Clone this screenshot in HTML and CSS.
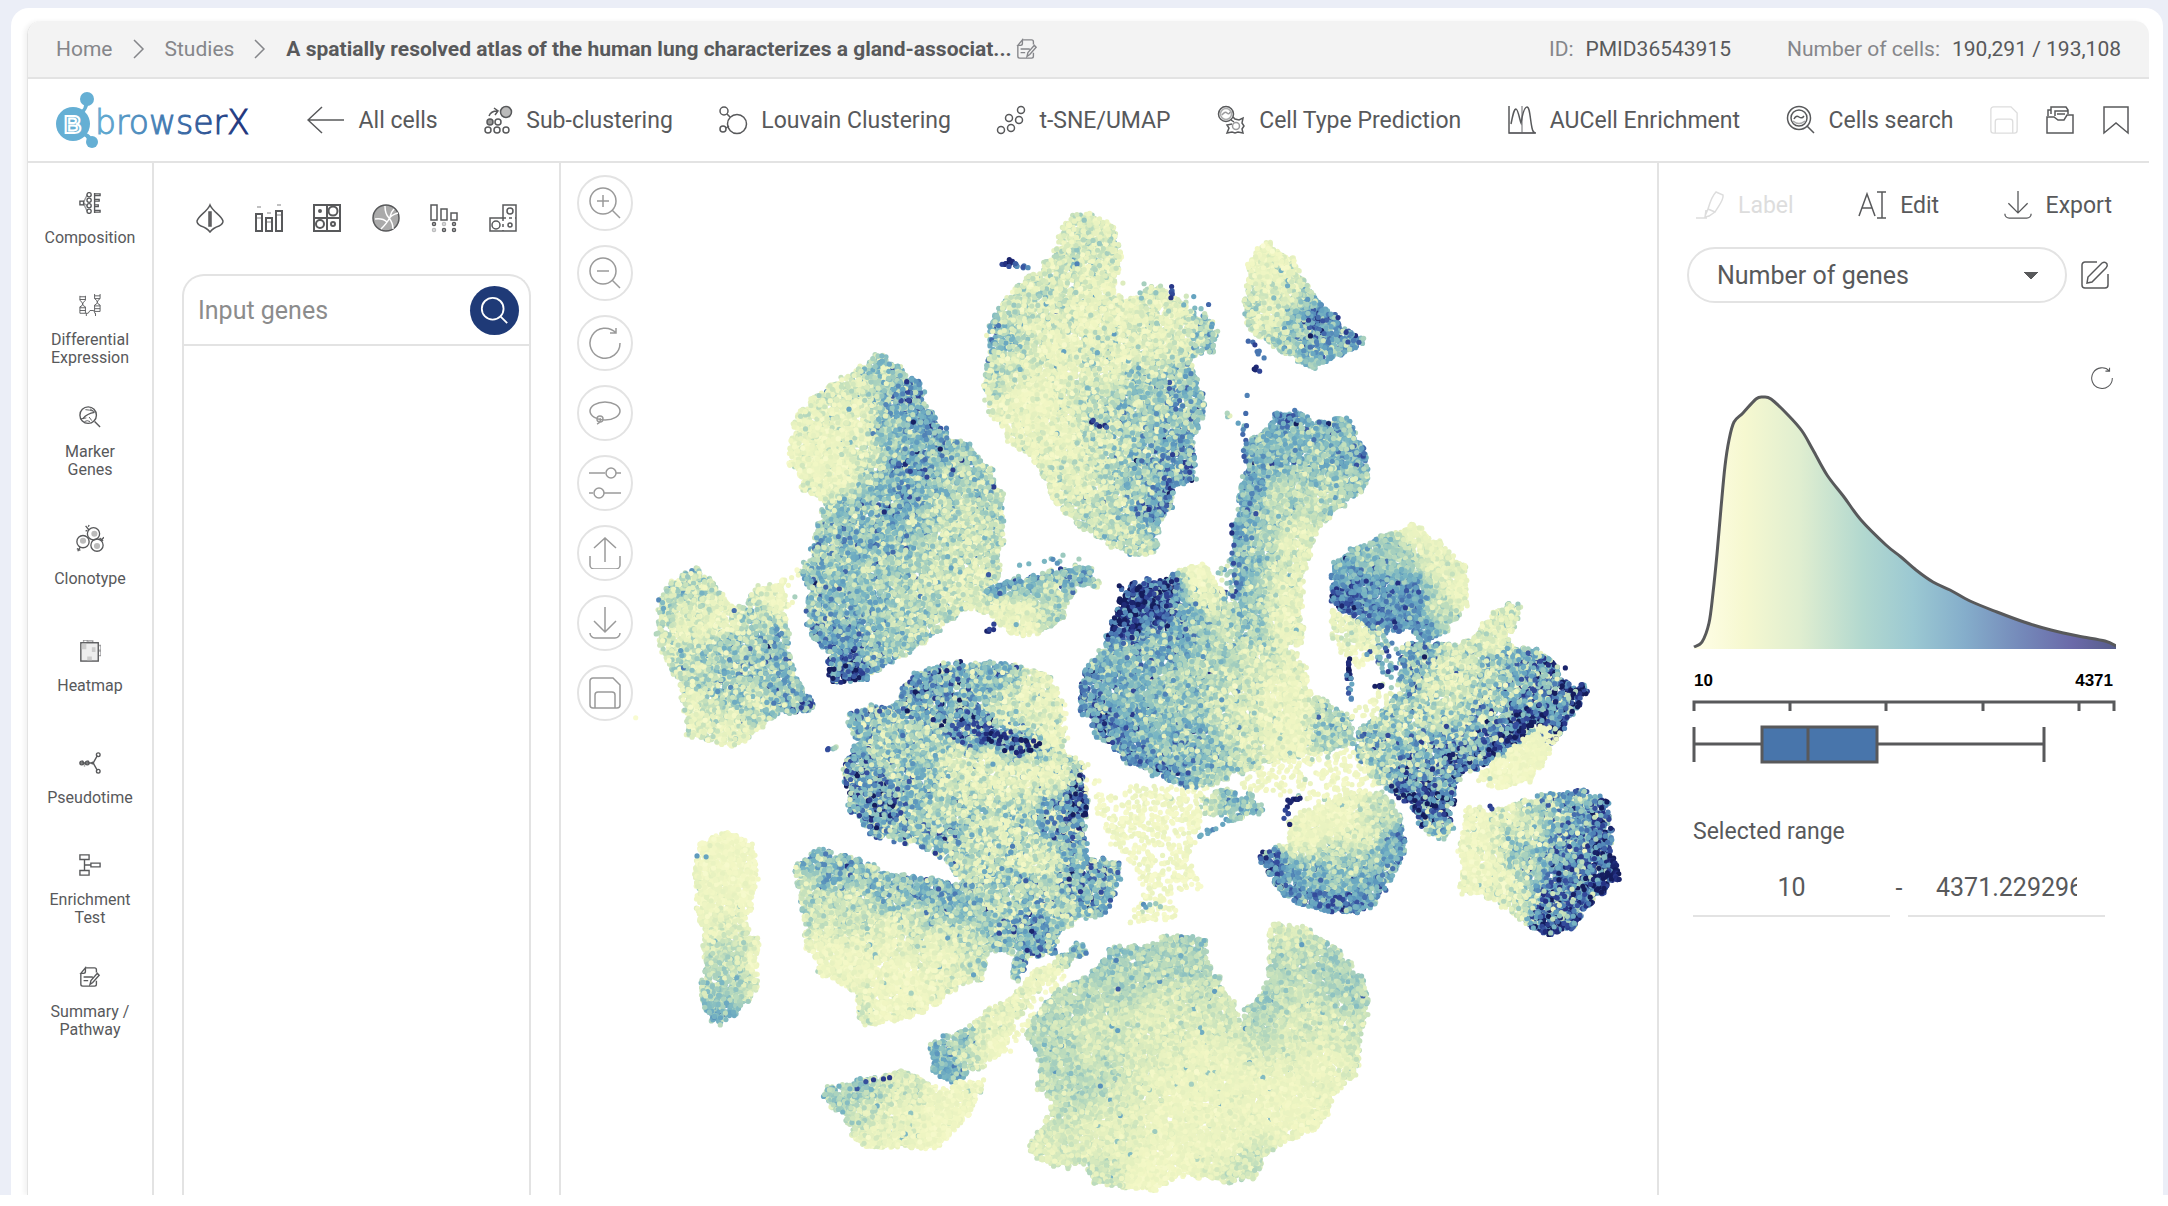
FILE: index.html
```html
<!DOCTYPE html>
<html lang="en">
<head>
    <meta charset="UTF-8">
    <meta name="viewport" content="width=device-width, initial-scale=1.0">
    <title>BrowserX</title>
    <link rel="stylesheet" href="styles.css">
</head>
<body>
    <svg class="sprite" aria-hidden="true">
        <symbol id="i-note" viewBox="0 0 24 24"><path d="M7 2h10a2 2 0 0 1 2 2v3M2 8v12a2 2 0 0 0 2 2h13a2 2 0 0 0 2-2v-4M2 8l5-6v4a2 2 0 0 1-2 2zM5 12h10M5 16h5M12 20l1-4 7-8 2 2-7 8z"/></symbol>
        <symbol id="i-chevron" viewBox="0 0 12 20"><path d="M1 1l9 9-9 9"/></symbol>
        <symbol id="i-plus" viewBox="0 0 32 32"><circle cx="14" cy="14" r="13"/><path d="M23 23l8 8M8 14h12M14 8v12"/></symbol>
        <symbol id="i-minus" viewBox="0 0 32 32"><circle cx="14" cy="14" r="13"/><path d="M23 23l8 8M8 14h12"/></symbol>
        <symbol id="i-reload" viewBox="0 0 32 32"><path d="M31 16a15 15 0 1 1-4-10M27 1v5h-6"/></symbol>
        <symbol id="i-lasso" viewBox="0 0 32 32"><ellipse cx="16" cy="14" rx="15" ry="9"/><circle cx="11" cy="22" r="3"/><path d="M8 27c3-1 4-3 3-6"/></symbol>
        <symbol id="i-sliders" viewBox="0 0 32 32"><path d="M0 6h16M27 6h5M0 26h4M15 26h17"/><circle cx="22" cy="6" r="5"/><circle cx="10" cy="26" r="5"/></symbol>
        <symbol id="i-upload" viewBox="0 0 32 32"><path d="M16 25V1M5 11L16 1l11 10M1 19v9a4 4 0 0 0 4 4h22a4 4 0 0 0 4-4v-9"/></symbol>
        <symbol id="i-download" viewBox="0 0 32 32"><path d="M16 0v25M5 14l11 11 11-11M1 26a5 5 0 0 0 5 5h20a5 5 0 0 0 5-5"/></symbol>
        <symbol id="i-save" viewBox="0 0 32 32"><path d="M4 1h20l7 7v20a3 3 0 0 1-3 3H4a3 3 0 0 1-3-3V4a3 3 0 0 1 3-3zM6 31V18a3 3 0 0 1 3-3h14a3 3 0 0 1 3 3v13"/></symbol>
    </svg>

    <div class="page">
    <div class="frame">
    <div class="app">

        <header class="crumbs">
            <nav class="crumb-list" aria-label="Breadcrumb">
                <a href="#">Home</a>
                <svg class="chevron"><use href="#i-chevron"/></svg>
                <a href="#">Studies</a>
                <svg class="chevron"><use href="#i-chevron"/></svg>
                <strong>A spatially resolved atlas of the human lung characterizes a gland-associat...</strong>
                <button class="icon-btn rename" aria-label="Edit title"><svg class="icon-s"><use href="#i-note"/></svg></button>
            </nav>
            <dl class="meta">
                <dt>ID:</dt><dd>PMID36543915</dd>
                <dt>Number of cells:</dt><dd>190,291 / 193,108</dd>
            </dl>
        </header>

        <div class="toolbar">
            <a class="logo" href="#" aria-label="BrowserX">
                <svg width="200" height="58" viewBox="0 0 200 58">
                    <defs>
                        <linearGradient id="wordmark"><stop offset="0" stop-color="#64aed3"/><stop offset=".5" stop-color="#3f74ad"/><stop offset="1" stop-color="#1d2f78"/></linearGradient>
                    </defs>
                    <g fill="#65afd4" stroke="none">
                        <circle cx="17" cy="33" r="17"/><circle cx="31" cy="8" r="7"/><circle cx="36" cy="51" r="6"/>
                        <path d="M24 20q5-3 4-8h5q-2 7-6 11zM26 45q5 0 5 5h5q0-6-6-8z"/>
                    </g>
                    <text x="8" y="42" class="mark">B</text>
                    <text x="39" y="43" class="wordmark">browserX</text>
                </svg>
            </a>
            <button class="tool">
                <svg class="arrow" viewBox="0 0 38 28"><path d="M37 14H1M15 1L1 14l14 13"/></svg>All cells
            </button>
            <button class="tool">
                <svg class="icon" viewBox="0 0 28 28"><circle cx="22" cy="6" r="5.500" fill="#bbb"/><circle cx="6" cy="16" r="3" fill="#999"/><circle cx="14" cy="16" r="3"/><circle cx="4" cy="24" r="3"/><circle cx="13" cy="24" r="3"/><circle cx="22" cy="24" r="3"/><path d="M5 10q2-5 8-5M10 2l4 3-3 4"/></svg>Sub-clustering
            </button>
            <button class="tool">
                <svg class="icon" viewBox="0 0 28 28"><circle cx="5" cy="5" r="4"/><circle cx="18" cy="18" r="9.500"/><circle cx="4" cy="23" r="3"/><path d="M8 8l3 3M7 22l3-2"/></svg>Louvain Clustering
            </button>
            <button class="tool">
                <svg class="icon" viewBox="0 0 28 28"><circle cx="24" cy="4" r="3.500"/><circle cx="12" cy="12" r="3.500"/><circle cx="22" cy="14" r="3.500"/><circle cx="14" cy="22" r="3.500"/><circle cx="4" cy="24" r="3.500"/></svg>t-SNE/UMAP
            </button>
            <button class="tool">
                <svg class="icon" viewBox="0 0 28 28"><circle cx="9" cy="8" r="7.500"/><circle cx="9" cy="8" r="5.500" opacity=".5"/><path d="M5 9q3-4 5-2t3-1" opacity=".6"/><path d="M14 14l3 2M16 11l2 2 4 1 4-2-1 5 2 3-2 3 1 4-5-1-3 1-3-1-5 1 2-5-2-3 5-1"/><circle cx="19" cy="20" r="3.500" opacity=".6"/></svg>Cell Type Prediction
            </button>
            <button class="tool">
                <svg class="icon" viewBox="0 0 28 28"><path d="M1 0v27h27M3 18C5 8 6 3 8 3s4 12 5 14c1-6 3-16 6-16s3 12 5 21q1 5 4 5"/><path d="M14 0v27M1 27h26" opacity=".6"/></svg>AUCell Enrichment
            </button>
            <button class="tool">
                <svg class="icon" viewBox="0 0 28 28"><circle cx="12" cy="12" r="11.500"/><circle cx="12" cy="12" r="8"/><path d="M7 13q2-4 5-2t5-1M20 20l7 7"/><path d="M6 15q6 5 12 0" opacity=".5"/></svg>Cells search
            </button>
            <div class="tool-icons">
                <button class="icon-btn" disabled aria-label="Save"><svg class="icon faint"><use href="#i-save"/></svg></button>
                <button class="icon-btn" aria-label="Collections"><svg class="icon" viewBox="0 0 28 28"><path d="M1 11h7l4 3h6l3-5h6v18H1zM2 10V4h3M5 8V1h15l2 3v4M9 10V5h13M11 8h8"/></svg></button>
                <button class="icon-btn" aria-label="Bookmark"><svg class="icon" viewBox="0 0 28 28"><path d="M2 1h24v26l-12-10L2 27z"/></svg></button>
            </div>
        </div>

        <main class="body">
            <nav class="side" aria-label="Analyses">
                <a class="side-item s" href="#"><svg class="icon-s" viewBox="0 0 24 24"><rect x="1" y="10" width="4" height="4"/><path d="M5 11l4-8M5 12l4 3M5 13l4 8" opacity=".6"/><circle cx="11" cy="3" r="2.300"/><circle cx="11" cy="9" r="2.300"/><circle cx="11" cy="15" r="2.300"/><circle cx="11" cy="21" r="2.300"/><path d="M17 1v22M17 2h6v2h-6zM17 8h5v2h-5zM17 14h4v2h-4zM17 20h6v2h-6z"/></svg>Composition</a>
                <a class="side-item l" href="#"><svg class="icon-s" viewBox="0 0 24 24"><path d="M1 2v5q3 2 3 4t-3 3v7h6v-7q-3-1-3-3t3-4V2M1 3h6M1 6h6M1 15h6M1 18h6M17 0v5q3 2 3 4t-3 3v7h6v-7q-3-1-3-3t3-4V0M17 2h6M17 5h6M17 13h6M17 16h6M7 21h3l2-3h4l2 4M8 24v-3M18 24v-3" stroke-width="1"/></svg>Differential<br>Expression</a>
                <a class="side-item xl" href="#"><svg class="icon-s" viewBox="0 0 24 24"><circle cx="10" cy="10" r="9"/><path d="M17 17l6 6M4 14q5-6 13-7"/><path d="M7 4q4 0 10 2M2 14l6-1M6 17q3-2 6 0M12 3l4 3M11 12l3 4" stroke-width="1"/></svg>Marker<br>Genes</a>
                <a class="side-item xl" href="#"><svg class="icon-m" viewBox="0 0 32 32"><circle cx="20" cy="10" r="7"/><circle cx="8" cy="19" r="7"/><circle cx="24" cy="23" r="7"/><g fill="#bbb" stroke="none"><circle cx="21" cy="10" r="3.500"/><circle cx="8" cy="18" r="3.500"/><circle cx="24" cy="24" r="3.500"/></g><path d="M15 6l-4-5M13 6l-2 1M14 2l1-2M5 25l-3 5M1 27l4 2M28 18l4-4M27 15l4 3"/></svg>Clonotype</a>
                <a class="side-item l" href="#"><svg class="icon-s" viewBox="0 0 24 24"><rect x="2" y="3" width="19" height="20" fill="#eee"/><g fill="#ccc" stroke="none"><path d="M3 4h5v6H3zM9 18h5v4H9zM14 8h4v5h-4z"/></g><path d="M5 2V0h4v2M10 2V1h5v2M22 6h2v5h-2M22 12h2v5h-2" opacity=".6"/></svg>Heatmap</a>
                <a class="side-item s" href="#"><svg class="icon-s" viewBox="0 0 24 24"><circle cx="3" cy="12" r="2"/><circle cx="9" cy="12" r="2"/><circle cx="15" cy="12" r="1"/><circle cx="21" cy="3" r="2"/><circle cx="21" cy="21" r="2"/><path d="M1 12h15M16 11l4-7M16 13l4 7"/><path d="M4 9v3M6 12v4M10 9v3" opacity=".5"/></svg>Pseudotime</a>
                <a class="side-item l" href="#"><svg class="icon-s" viewBox="0 0 24 24"><path d="M1 1h10v5H1zM13 10h10v4H13zM1 18h10v5H1zM6 6v12M6 12h7"/></svg>Enrichment<br>Test</a>
                <a class="side-item l" href="#"><svg class="icon-s"><use href="#i-note"/></svg>Summary /<br>Pathway</a>
            </nav>

            <section class="genes">
                <div class="plot-types">
                    <button class="icon-btn" aria-label="Violin plot"><svg class="icon" viewBox="0 0 28 28"><path d="M14 1C17 8 25 11 27 17q0 3-4 5-6 2-9 6-3-4-9-6-4-2-4-5C3 11 11 8 14 1z"/><path d="M13 8h2v14h-2z" fill="#777"/></svg></button>
                    <button class="icon-btn" aria-label="Box plot"><svg class="icon dark" viewBox="0 0 28 28"><path d="M1 10h6v17H1zM11 14h6v13h-6zM21 7h6v20h-6z"/><path d="M1 14h6M11 18h6M21 11h6M2 3h4M12 9h4M22 1h4" opacity=".5" stroke-width="1.500"/></svg></button>
                    <button class="icon-btn" aria-label="Dot plot"><svg class="icon dark" viewBox="0 0 28 28"><path d="M1 1h26v26H1zM14 1v26M1 14h26"/><circle cx="7" cy="7" r="1"/><circle cx="20" cy="7" r="4.500"/><circle cx="7" cy="20" r="4"/><circle cx="20" cy="20" r="2"/></svg></button>
                    <button class="icon-btn" aria-label="Density plot"><svg class="icon" viewBox="0 0 28 28"><circle cx="14" cy="14" r="13" fill="#aaa"/><g stroke="#fff"><path d="M13 2q0 8 4 12 4 5 4 11M26 9q-7 2-9 6t-8 10M3 15q8-1 12 3M22 5q-3 3-4 8"/></g></svg></button>
                    <button class="icon-btn" aria-label="UpSet plot"><svg class="icon" viewBox="0 0 28 28"><path d="M1 1h6v15H1zM11 5h6v11h-6zM21 9h6v7h-6z"/><circle cx="4" cy="20" r="1.500"/><circle cx="24" cy="20" r="1.500"/><circle cx="14" cy="26" r="1.500"/><circle cx="24" cy="26" r="1.500"/><g opacity=".4"><circle cx="14" cy="20" r="1.500"/><circle cx="4" cy="26" r="1.500"/></g></svg></button>
                    <button class="icon-btn" aria-label="Correlation"><svg class="icon" viewBox="0 0 28 28"><path d="M14 14V1h13v26H1V14z"/><path d="M14 14h13M14 14v13" stroke-dasharray="3 3"/><circle cx="21" cy="7" r="3"/><circle cx="7" cy="21" r="4"/><circle cx="21" cy="21" r="2"/></svg></button>
                </div>
                <div class="gene-box">
                    <form class="gene-search">
                        <input type="text" aria-label="Input genes" placeholder="Input genes">
                        <button type="button" class="go" aria-label="Search"><svg viewBox="0 0 32 32"><circle cx="14" cy="14" r="12"/><path d="M22 22l8 8"/></svg></button>
                    </form>
                </div>
            </section>

            <section class="scatter">
                <canvas id="umap"></canvas>
                <div class="view-tools">
                    <button aria-label="Zoom in"><svg><use href="#i-plus"/></svg></button>
                    <button aria-label="Zoom out"><svg><use href="#i-minus"/></svg></button>
                    <button aria-label="Reset"><svg><use href="#i-reload"/></svg></button>
                    <button aria-label="Lasso"><svg><use href="#i-lasso"/></svg></button>
                    <button aria-label="Settings"><svg><use href="#i-sliders"/></svg></button>
                    <button aria-label="Upload"><svg><use href="#i-upload"/></svg></button>
                    <button aria-label="Download"><svg><use href="#i-download"/></svg></button>
                    <button aria-label="Save"><svg><use href="#i-save"/></svg></button>
                </div>
            </section>

            <aside class="legend">
                <div class="legend-actions">
                    <button class="tool" disabled><svg class="icon" viewBox="0 0 28 28"><path d="M20 1l7 3c1 5-4 10-8 17l-7-3C14 11 16 5 20 1zM12 18l-3 7M19 21l-6 4-4 1 1-7M0 27h11"/></svg>Label</button>
                    <button class="tool"><svg class="icon" viewBox="0 0 28 28"><path d="M1 25L9 3l8 22M4 17h10M19 1h9M19 27h9M24 1v26"/></svg>Edit</button>
                    <button class="tool"><svg class="icon"><use href="#i-download"/></svg>Export</button>
                </div>
                <div class="legend-pick">
                    <select aria-label="Colour by"><option>Number of genes</option></select>
                    <button class="icon-btn" aria-label="Edit annotation"><svg class="icon" viewBox="0 0 28 28"><path d="M16 1H4a3 3 0 0 0-3 3v20a3 3 0 0 0 3 3h20a3 3 0 0 0 3-3V13M6 22l1-6L21 2q3-2 5 1 1 2-1 4L11 21z"/></svg></button>
                </div>
                <button class="icon-btn reset" aria-label="Reset range"><svg class="icon-s"><use href="#i-reload"/></svg></button>
                <svg class="density" viewBox="0 0 424 378">
                    <defs>
                        <linearGradient id="ramp">
                            <stop offset="0" stop-color="#fffee8"/><stop offset=".12" stop-color="#f6f8d0"/><stop offset=".25" stop-color="#e0eed0"/>
                            <stop offset=".4" stop-color="#b2d8cf"/><stop offset=".52" stop-color="#9bc8d2"/><stop offset=".64" stop-color="#85aecb"/>
                            <stop offset=".78" stop-color="#7488b9"/><stop offset=".9" stop-color="#6a69a8"/><stop offset="1" stop-color="#565d8c"/>
                        </linearGradient>
                    </defs>
                    <path id="area" fill="url(#ramp)"/>
                    <path id="curve" class="ink"/>
                    <text x="2" y="296">10</text>
                    <text x="421" y="296" text-anchor="end">4371</text>
                    <path class="ink" d="M2 321v-9h420v9M98 312v9M194 312v9M291 312v9M387 312v9"/>
                    <path class="ink" d="M2 337v35M2 354h68M185 354h167M352 337v35"/>
                    <rect class="ink box" x="70" y="337" width="115" height="35"/>
                    <path class="ink" d="M116 337v35"/>
                </svg>
                <p class="range-title">Selected range</p>
                <div class="range">
                    <input type="text" value="10" aria-label="Range start">
                    <span>-</span>
                    <input type="text" value="4371.229296875" aria-label="Range end">
                </div>
            </aside>
        </main>
    </div>
    </div>
    </div>
    <script src="plot.js"></script>
</body>
</html>
```
FILE: styles.css
```css
* {
    margin: 0;
    padding: 0;
    box-sizing: border-box;
}
html, body {
    height: 100%;
}
body {
    font-family: Roboto, sans-serif;
    font-size: 23px;
    color: #58595b;
    background-color: #fff;
    overflow: hidden;
}
a {
    color: inherit;
    text-decoration: none;
}
button, input, select {
    font: inherit;
    color: inherit;
    border: none;
    background: none;
    outline: none;
}
svg {
    display: block;
    fill: none;
    stroke: currentColor;
    stroke-width: 1.5;
}
.sprite {
    position: absolute;
    width: 0;
    height: 0;
}
.icon {
    width: 28px;
    height: 28px;
    flex: none;
    overflow: visible;
}
.icon.dark {
    stroke-width: 2;
}
.icon-s {
    width: 22px;
    height: 22px;
}
.icon-m {
    width: 28px;
    height: 32px;
}
.faint {
    color: #ddd;
}

/* outer shell */
.page {
    height: calc(100vh - 11px);
    padding: 8px 5px 0 11px;
    background-color: #ebeef7;
}
.frame {
    height: 100%;
    padding: 13px 14px 0 16px;
    background-color: #fff;
    border-radius: 18px 18px 0 0;
    overflow: hidden;
}
.app {
    height: 100%;
    display: flex;
    flex-direction: column;
    border-left: 1px solid #e3e3e3;
    border-radius: 14px 14px 0 0;
    box-shadow: -3px 0 4px #f3f3f3;
}

/* breadcrumbs */
.crumbs {
    height: 58px;
    flex: none;
    display: flex;
    justify-content: space-between;
    align-items: center;
    padding: 0 28px;
    background-color: #f3f3f3;
    border-bottom: 2px solid #e3e3e3;
    border-radius: 14px 14px 0 0;
    font-size: 21px;
    color: #85868a;
    white-space: nowrap;
}
.crumb-list {
    display: flex;
    align-items: center;
    gap: 20px;
}
.crumb-list strong {
    color: #58595b;
}
.chevron {
    width: 12px;
    height: 20px;
}
.rename {
    margin-left: -16px;
}
.meta {
    display: flex;
}
.meta dd {
    margin-left: 12px;
    color: #58595b;
}
.meta dd + dt {
    margin-left: 56px;
}

/* top tools */
.toolbar {
    height: 84px;
    flex: none;
    display: flex;
    justify-content: space-between;
    align-items: center;
    padding: 0 14px 0 28px;
    border-bottom: 2px solid #e3e3e3;
}
.mark {
    font: bold 24px "Liberation Sans", sans-serif;
    stroke: #fff;
    stroke-width: 2;
}
.wordmark {
    font: 200 33px "DejaVu Sans", sans-serif;
    fill: url(#wordmark);
    stroke: url(#wordmark);
    stroke-width: 1;
}
.logo {
    margin-right: 4px;
}
.tool {
    display: flex;
    align-items: center;
    gap: 14px;
    white-space: nowrap;
}
.tool:disabled {
    color: #ddd;
}
.arrow {
    width: 38px;
    height: 28px;
}
.tool-icons {
    display: flex;
    gap: 28px;
    margin: 0 5px 0 -10px;
}

/* columns */
.body {
    flex: 1;
    min-height: 0;
    display: grid;
    grid-template-columns: 126px 407px 1fr 492px;
}
.side {
    padding-top: 29px;
    border-right: 2px solid #e3e3e3;
    font-size: 16px;
    line-height: 18px;
    text-align: center;
}
.side-item {
    display: flex;
    flex-direction: column;
    align-items: center;
    gap: 15px;
}
.side-item.s {
    height: 102px;
}
.side-item.l {
    height: 112px;
}
.side-item.xl {
    height: 117px;
}

.genes {
    display: flex;
    flex-direction: column;
    padding: 41px 28px 0;
    border-right: 2px solid #e3e3e3;
}
.plot-types {
    display: flex;
    justify-content: space-between;
    padding: 0 14px;
    margin-bottom: 42px;
}
.gene-box {
    flex: 1;
    border: 2px solid #e3e3e3;
    border-bottom: none;
    border-radius: 22px 22px 0 0;
}
.gene-search {
    height: 70px;
    display: flex;
    align-items: center;
    padding: 0 10px 0 14px;
    border-bottom: 2px solid #e3e3e3;
    font-size: 25px;
}
.gene-search input {
    flex: 1;
    min-width: 0;
}
.gene-search input::placeholder {
    color: #8c8c8c;
}
.go {
    width: 49px;
    height: 49px;
    padding: 10px;
    border-radius: 50%;
    background-color: #1f3a77;
    color: #fff;
}
.go svg {
    width: 29px;
    height: 29px;
    stroke-width: 2;
}

.scatter {
    position: relative;
    min-width: 0;
    overflow: hidden;
}
#umap {
    display: block;
    width: 100%;
    height: 100%;
}
.view-tools {
    position: absolute;
    top: 12px;
    left: 16px;
    display: flex;
    flex-direction: column;
    gap: 14px;
}
.view-tools button {
    width: 56px;
    height: 56px;
    display: flex;
    justify-content: center;
    align-items: center;
    border: 2px solid #e3e3e3;
    border-radius: 50%;
    background-color: #fff;
    color: #9a9a9a;
}
.view-tools svg {
    width: 32px;
    height: 32px;
}

/* colour legend */
.legend {
    padding: 28px 28px 0;
    border-left: 2px solid #e3e3e3;
}
.legend-actions {
    display: flex;
    justify-content: space-between;
    padding: 0 9px;
    margin-bottom: 28px;
}
.legend-pick {
    display: flex;
    align-items: center;
    gap: 14px;
    font-size: 25px;
}
.legend-pick select {
    width: 380px;
    height: 56px;
    padding: 0 28px;
    border: 2px solid #e3e3e3;
    border-radius: 28px;
    appearance: none;
    background: linear-gradient(to bottom left, #58595b 50%, transparent 50%) right 34px top 23px / 7px 8px no-repeat,
                linear-gradient(to bottom right, #58595b 50%, transparent 50%) right 27px top 23px / 7px 8px no-repeat;
}
.reset {
    display: block;
    margin: 64px 8px 0 auto;
}
.density {
    width: 424px;
    max-width: 100%;
    margin: 1px 0 0 5px;
}
.density text {
    font: bold 17px "Liberation Sans", sans-serif;
    fill: #000;
    stroke: none;
}
.density .ink {
    stroke: #58595b;
    stroke-width: 3;
}
.density #area {
    stroke: none;
}
.density .box {
    fill: #4875ab;
}
.range-title {
    margin: 50px 0 14px 6px;
}
.range {
    display: flex;
    align-items: center;
    justify-content: space-between;
    width: 412px;
    margin-left: 6px;
    font-size: 25px;
}
.range input {
    width: 197px;
    height: 58px;
    padding: 0 28px;
    text-align: center;
    border-bottom: 2px solid #e3e3e3;
}
```
FILE: plot.js
```js
// seeded random so the layout of dots is stable between reloads
var seed = 7;
function rnd() {
    seed = (seed + 0x6D2B79F5) | 0;
    var t = Math.imul(seed ^ (seed >>> 15), 1 | seed);
    t = (t + Math.imul(t ^ (t >>> 7), 61 | t)) ^ t;
    return ((t ^ (t >>> 14)) >>> 0) / 4294967296;
}
function gauss() {
    return (rnd() + rnd() + rnd() + rnd() - 2) * 1.7;
}

// edge: outline of the cluster, v: x, y, level triples, noise: spread of the level, d: density
var clusters = [
    { noise: 0.17, edge: [773,156,791,155,805,164,810,183,808,198,805,217,820,214,834,207,847,212,859,224,877,233,880,253,866,256,862,268,871,287,869,304,862,321,866,345,848,354,845,369,836,386,836,401,817,401,785,383,761,362,752,337,733,321,713,292,712,277,715,251,717,229,733,210,754,195,766,174],
      v: [770,250,.14,735,230,.26,716,240,.45,785,165,.2,770,185,.24,765,215,.2,850,240,.16,876,245,.4,800,265,.18,820,290,.34,850,290,.43,790,320,.25,800,300,.3,845,325,.46,862,345,.64,842,370,.6,820,350,.38,800,370,.27,820,395,.28,745,290,.1,770,320,.13,780,345,.17,720,270,.25,800,220,.14] },
    { noise: 0.16, edge: [636,256,650,265,664,276,670,294,687,317,701,322,713,335,726,362,726,383,722,415,705,434,687,448,666,465,642,480,617,493,601,492,600,475,584,453,586,427,580,415,590,388,597,362,583,356,572,337,571,316,581,293,608,274],
      v: [595,320,.1,612,305,.14,600,342,.1,625,320,.18,636,262,.36,618,280,.22,655,290,.56,643,315,.4,672,300,.52,680,322,.48,655,340,.54,650,362,.52,625,375,.4,617,388,.46,700,345,.36,690,370,.26,710,400,.24,680,420,.26,640,410,.38,595,410,.4,588,430,.46,615,440,.44,660,445,.3,608,470,.56,605,487,.8,640,465,.4,700,420,.22,720,380,.3] },
    { noise: 0.17, edge: [503,411,512,418,528,436,538,440,549,426,566,420,568,439,571,475,573,484,589,511,587,515,564,514,554,523,542,533,530,540,499,533,494,502,489,489,476,466,477,436,487,419],
      v: [503,415,.3,480,440,.32,500,450,.16,525,450,.14,550,450,.34,565,430,.06,480,475,.2,530,470,.42,560,470,.4,520,490,.36,505,480,.3,570,500,.46,585,510,.55,500,515,.2,530,532,.16,545,505,.3] },
    { noise: 0.14, edge: [915,175,924,181,933,187,941,198,948,212,960,223,971,236,987,247,975,254,966,255,957,264,948,266,935,258,921,251,910,242,901,236,900,214,902,195,909,181],
      v: [918,195,.1,903,225,.3,915,230,.14,925,245,.36,935,212,.2,950,230,.72,945,217,.4,955,245,.6,963,243,.5,980,248,.6,950,258,.48,935,240,.38] },
    { noise: 0.12, edge: [902,321,916,309,924,299,938,297,949,304,960,304,973,301,980,316,987,324,991,345,987,352,973,362,960,376,949,390,944,410,941,434,941,465,902,470,894,451,892,427,892,405,893,378,898,354,902,337],
      v: [935,300,.66,945,310,.46,975,310,.48,983,325,.55,925,325,.45,950,330,.4,985,345,.42,901,355,.52,930,360,.3,960,360,.3,893,385,.6,904,390,.4,915,390,.34,935,390,.18,893,425,.55,905,430,.36,930,430,.14,903,455,.42,930,455,.14] },
    { noise: 0.14, edge: [812,424,830,421,847,416,868,407,877,417,891,439,897,458,938,470,946,499,951,503,976,518,980,538,954,544,921,549,888,562,863,570,845,565,814,549,793,531,781,507,781,494,796,468,805,451],
      v: [820,435,.88,812,450,.9,840,425,.78,836,445,.7,868,414,.06,875,430,.15,860,450,.46,890,450,.28,810,475,.46,783,495,.62,793,525,.64,815,495,.46,840,530,.46,816,548,.64,850,565,.58,870,545,.44,865,480,.36,850,505,.38,890,500,.25,910,480,.22,930,500,.1,900,530,.22,930,530,.1,965,525,.34,880,560,.35,852,462,.55,835,470,.45] },
    { noise: 0.09, edge: [964,410,982,395,999,389,1013,383,1024,378,1032,388,1049,398,1061,415,1060,439,1046,458,1030,463,1016,453,1002,457,985,450,964,436,963,427],
      v: [975,415,.54,967,430,.7,970,438,.75,990,400,.42,1000,430,.6,1025,385,.14,1010,400,.38,1045,410,.18,1055,430,.14,1020,430,.58,1042,440,.3,1000,450,.66,1025,455,.6] },
    { noise: 0.14, d: 0.5, edge: [961,440,985,450,1002,457,1007,468,995,475,985,484,971,474,963,458],
      v: [975,455,.15,985,475,.04,1000,460,.3] },
    { noise: 0.2, edge: [1018,465,1045,466,1065,463,1076,448,1093,435,1099,438,1095,453,1090,468,1104,468,1122,475,1129,492,1148,497,1133,525,1122,538,1112,525,1088,545,1055,562,1050,575,1050,598,1041,608,1028,596,1018,578,1000,570,982,549,982,528,1000,515,1015,497,1012,476],
      v: [1090,445,.2,1080,460,.14,1030,472,.45,1015,495,.44,1045,480,.22,1050,500,.18,1035,510,.26,1075,490,.3,1100,480,.5,1120,485,.6,1142,498,.92,1130,510,.7,1110,500,.5,1080,515,.44,1010,520,.36,1000,545,.38,1025,535,.42,1102,526,.85,1085,540,.7,1060,555,.6,1040,560,.54,1030,580,.82,1045,585,.7,1042,603,.4,1015,570,.58,995,565,.3] },
    { noise: 0.05, edge: [1122,525,1128,530,1122,538,1116,550,1107,564,1085,570,1067,565,1088,545,1112,527],
      v: [1110,540,.12,1090,560,.06] },
    { noise: 0.12, edge: [964,578,988,572,1003,575,1012,591,1016,609,1010,632,994,653,976,660,948,657,927,646,911,620,933,609,932,596,940,586,950,586],
      v: [970,590,.08,950,600,.1,935,605,.12,985,600,.18,1000,590,.28,1013,605,.54,960,620,.32,915,622,.7,930,637,.6,950,652,.62,975,657,.7,1000,642,.56,980,635,.46,950,635,.48] },
    { noise: 0.18, edge: [1061,583,1076,588,1098,580,1116,575,1145,571,1161,578,1165,593,1165,619,1169,635,1152,651,1137,670,1122,676,1110,672,1088,656,1073,648,1056,644,1058,625,1055,614],
      v: [1068,600,.06,1068,630,.06,1085,640,.1,1088,590,.15,1100,600,.28,1105,625,.38,1120,590,.38,1140,580,.5,1160,590,.7,1160,610,.7,1166,638,.92,1135,610,.54,1130,635,.62,1145,650,.7,1120,660,.68,1122,673,.82,1145,625,.66,1095,655,.2] },
    { noise: 0.2, edge: [614,514,644,510,656,494,677,481,709,479,730,480,752,486,763,494,768,515,770,544,781,552,786,578,784,604,786,619,810,625,810,640,798,660,784,664,764,672,764,687,743,695,735,711,730,703,738,687,718,677,694,635,687,625,670,612,632,604,614,583,611,554,620,533,614,523],
      v: [620,518,.48,640,530,.36,660,500,.52,690,495,.52,720,488,.43,715,500,.4,750,505,.14,760,530,.1,680,515,.5,700,523,.6,715,529,.66,733,537,.6,750,541,.4,725,515,.16,670,535,.32,715,552,.14,615,560,.52,625,570,.5,640,580,.62,650,555,.38,700,555,.17,740,560,.12,690,580,.3,660,590,.43,680,605,.43,783,575,.8,779,592,.62,755,600,.44,762,560,.14,740,590,.3,720,600,.24,750,620,.18,710,620,.28,800,630,.46,785,640,.5,745,645,.4,765,660,.34,750,675,.52,735,685,.46,720,640,.3,732,705,.4] },
    { noise: 0.14, edge: [575,625,594,614,622,622,641,632,675,635,694,640,718,640,728,661,733,690,713,687,711,706,685,719,670,732,632,741,620,737,622,719,598,706,586,690,581,661],
      v: [590,620,.46,605,628,.44,580,640,.28,640,640,.42,665,640,.5,690,648,.48,700,660,.4,620,655,.26,660,665,.28,600,665,.24,640,680,.14,600,695,.07,680,690,.14,650,710,.05,640,730,.07,625,735,.2,720,670,.35,700,680,.24] },
    { noise: 0.1, edge: [507,609,528,601,546,612,547,640,540,666,548,685,548,711,538,729,520,742,508,726,510,685,505,656,503,627],
      v: [525,620,.06,510,650,.12,540,640,.06,520,670,.17,528,690,.3,546,700,.1,518,715,.35,535,705,.35,518,735,.46] },
    { noise: 0.11, edge: [596,796,600,787,632,779,651,774,668,781,680,789,699,781,713,781,704,800,687,820,677,831,651,828,629,831,617,823,612,807],
      v: [600,792,.36,620,787,.4,650,785,.22,625,805,.27,650,810,.14,690,800,.08,680,825,.05,635,822,.14] },
    { noise: 0.12, edge: [671,757,699,744,730,721,752,700,785,681,784,687,762,706,748,718,732,742,728,760,704,774,690,784,675,774],
      v: [680,765,.46,690,778,.5,695,750,.42,702,762,.25,715,740,.18,720,760,.04,740,720,.14,755,708,.1,783,684,.45] },
    { noise: 0.09, edge: [744,750,747,734,763,719,799,698,802,685,830,685,845,676,869,677,875,698,888,719,897,740,906,724,918,708,918,682,921,668,948,672,967,687,982,703,991,719,985,745,983,763,979,779,964,794,954,813,936,824,918,831,906,852,888,854,857,849,830,861,787,854,787,839,763,844,743,832,757,810,763,797,749,786,754,771],
      v: [765,730,.32,758,750,.33,805,690,.4,820,700,.34,855,685,.35,870,680,.36,790,750,.25,775,785,.33,770,800,.27,840,740,.2,760,825,.22,800,820,.17,795,848,.25,835,855,.05,860,800,.11,880,770,.13,930,690,.3,925,675,.22,970,700,.35,987,722,.36,980,750,.24,940,740,.22,960,770,.14,930,800,.1,905,840,.25,890,820,.12,910,730,.34,890,735,.24] },
    { noise: 0.12, edge: [692,439,708,431,722,422,754,415,778,409,789,413,799,425,790,423,778,424,768,448,743,460,722,453,715,443],
      v: [725,424,.55,745,418,.5,775,413,.45,787,413,.55,798,425,.22,760,430,.3,740,445,.12,725,442,.14,765,445,.32,700,435,.2] },
    { noise: 0.14, d: 0.6, edge: [869,578,881,569,906,575,914,586,894,594,872,588], v: [890,580,.42,875,582,.25] },
    // thin, scattered groups
    { noise: 0.04, d: 0.25, edge: [790,575,830,568,875,570,868,592,862,615,870,643,845,642,852,662,818,668,828,640,805,612], v: [830,600,.02] },
    { noise: 0.05, d: 0.18, edge: [890,562,945,545,985,540,1000,575,965,585,935,575,905,572], v: [930,565,.08] },
    { noise: 0.12, d: 0.14, edge: [985,470,1015,462,1015,500,1000,520,968,520,990,505,1003,490], v: [990,515,.06,1010,470,.6] },
    { noise: 0.18, d: 0.18, edge: [880,415,892,400,897,460,885,440], v: [888,430,.45] },
    { noise: 0.15, d: 0.06, edge: [805,200,822,203,870,214,880,232,850,225,820,214], v: [860,215,.5,812,205,.25] },
    { noise: 0.06, d: 0.1, edge: [768,490,775,540,800,570,785,575,770,545], v: [780,550,.05] },
    { noise: 0.06, d: 0.16, edge: [728,763,745,725,772,698,766,716,742,745], v: [745,730,.04] },
    { noise: 0.15, d: 0.14, edge: [655,601,690,608,700,625,680,612], v: [675,608,.4] },
    { noise: 0.04, d: 0.1, edge: [560,440,566,420,580,410,575,440], v: [570,425,.06] }
];

// strings of single cells: x1, y1, x2, y2, level, count
var strings = [
    [726, 191, 733, 190, .9, 10], [733, 192, 742, 193, .68, 10], [975, 477, 976, 492, .95, 12], [976, 490, 978, 505, .65, 8],
    [905, 246, 912, 260, .8, 7], [908, 264, 910, 268, .9, 4], [902, 286, 905, 286, .75, 1], [901, 299, 901, 299, .7, 1],
    [891, 301, 899, 312, .5, 4], [899, 308, 902, 335, .75, 9], [714, 457, 718, 452, .92, 5], [600, 541, 600, 542, .75, 2],
    [602, 541, 605, 542, .4, 3], [932, 580, 939, 578, .92, 8], [932, 583, 931, 594, .9, 6], [868, 604, 882, 598, .6, 8],
    [995, 496, 1000, 496, .95, 4], [627, 783, 643, 779, .85, 4], [1077, 585, 1081, 585, .9, 2], [1132, 483, 1132, 483, .97, 1],
    [460, 519, 460, 519, .02, 1], [827, 654, 837, 655, .5, 5], [888, 299, 888, 300, .25, 2], [846, 209, 847, 215, .85, 5],
    [735, 409, 767, 405, .45, 4], [762, 404, 765, 407, .6, 3], [505, 618, 512, 618, .55, 2], [1166, 620, 1170, 636, .98, 24],
    [790, 305, 800, 308, .85, 6], [690, 524, 722, 538, .85, 8], [712, 526, 724, 535, .88, 8], [730, 534, 752, 538, .97, 10],
    [728, 542, 746, 544, .97, 6], [1090, 535, 1108, 522, .95, 14], [920, 182, 912, 178, .05, 3], [770, 403, 781, 403, .4, 2],
    [891, 380, 894, 430, .8, 8]
];

var ramp = [[250,252,212],[242,247,196],[226,239,190],[196,224,188],[160,204,190],[122,182,194],[98,160,192],[76,124,180],[52,76,156],[36,48,130],[20,28,92]];
function shade(v) {
    v = Math.max(0, Math.min(0.999, v)) * (ramp.length - 1);
    var i = Math.floor(v), f = v - i, a = ramp[i], b = ramp[i + 1];
    return 'rgb(' + a.map(function (c, k) { return Math.round(c + (b[k] - c) * f); }) + ')';
}
function inside(e, x, y) {
    var hit = false;
    for (var i = 0, j = e.length - 2; i < e.length; j = i, i += 2) {
        if ((e[i + 1] > y) !== (e[j + 1] > y) && x < (e[j] - e[i]) * (y - e[i + 1]) / (e[j + 1] - e[i + 1]) + e[i]) hit = !hit;
    }
    return hit;
}
function level(v, x, y) {
    var s = 0, w = 0;
    for (var i = 0; i < v.length; i += 3) {
        var dx = x - v[i], dy = y - v[i + 1];
        var k = 1 / Math.pow(dx * dx + dy * dy + 20, 2);
        s += k * v[i + 2];
        w += k;
    }
    return s / w;
}

function makeCells() {
    var cells = [];
    clusters.forEach(function (c) {
        var xs = c.edge.filter(function (n, i) { return i % 2 === 0; });
        var ys = c.edge.filter(function (n, i) { return i % 2 === 1; });
        var x0 = Math.min.apply(null, xs), x1 = Math.max.apply(null, xs);
        var y0 = Math.min.apply(null, ys), y1 = Math.max.apply(null, ys);
        var n = (x1 - x0) * (y1 - y0) * (c.d || 1) * 0.45;
        for (var i = 0; i < n; i++) {
            var x = x0 + rnd() * (x1 - x0), y = y0 + rnd() * (y1 - y0);
            // wobble the outline a little
            var wx = Math.sin(y * 0.7) + Math.sin(y * 0.23 + x * 0.1), wy = Math.sin(x * 0.6) + Math.sin(x * 0.27 + y * 0.1);
            if (!inside(c.edge, x + wx, y + wy)) continue;
            var base = level(c.v, x, y);
            var v = base + gauss() * c.noise * (0.4 + base * 1.2);
            if (rnd() < c.noise * 0.1) v += 0.3;
            cells.push([x + gauss() * 0.6, y + gauss() * 0.6, Math.max(v, 0.04 + rnd() * 0.12)]);
        }
    });
    for (var i = cells.length - 1; i > 0; i--) {
        var j = Math.floor(rnd() * (i + 1)), t = cells[i];
        cells[i] = cells[j];
        cells[j] = t;
    }
    strings.forEach(function (s) {
        for (var i = 0; i < s[5]; i++) {
            var f = s[5] > 1 ? i / (s[5] - 1) : 0, g = s[5] > 1 ? 1.2 : 0;
            cells.push([s[0] + (s[2] - s[0]) * f + gauss() * g, s[1] + (s[3] - s[1]) * f + gauss() * g, s[4] + gauss() * 0.06]);
        }
    });
    return cells;
}

var canvas = document.querySelector('#umap');
var cells = makeCells();
function drawCells() {
    var box = canvas.parentNode.getBoundingClientRect();
    canvas.width = box.width;
    canvas.height = box.height;
    var ctx = canvas.getContext('2d');
    var k = Math.min(box.width / 792, box.height / 746);
    cells.forEach(function (c) {
        ctx.fillStyle = shade(c[2]);
        ctx.beginPath();
        ctx.arc((c[0] - 406) * k, (c[1] - 118) * k, 2.6, 0, 7);
        ctx.fill();
    });
}

// density curve of the selected metric
var pts = [[2,257],[10,252],[17,233],[21,203],[25,164],[29,118],[33,76],[37,50],[42,32],[51,23],[64,9],[71,7],[79,9],[96,25],[110,41],[121,60],[135,85],[152,107],[169,130],[194,155],[209,167],[224,180],[241,192],[258,200],[278,211],[305,222],[332,232],[359,240],[386,246],[413,251],[424,256]];
function drawCurve() {
    var d = 'M' + pts[0];
    for (var i = 0; i < pts.length - 1; i++) {
        var a = pts[i - 1] || pts[i], b = pts[i], c = pts[i + 1], e = pts[i + 2] || c;
        d += 'C' + [b[0] + (c[0] - a[0]) / 6, b[1] + (c[1] - a[1]) / 6, c[0] - (e[0] - b[0]) / 6, c[1] - (e[1] - b[1]) / 6, c[0], c[1]];
    }
    document.querySelector('#curve').setAttribute('d', d);
    document.querySelector('#area').setAttribute('d', d + 'V259H2Z');
}

drawCells();
drawCurve();
window.addEventListener('resize', drawCells);
```
